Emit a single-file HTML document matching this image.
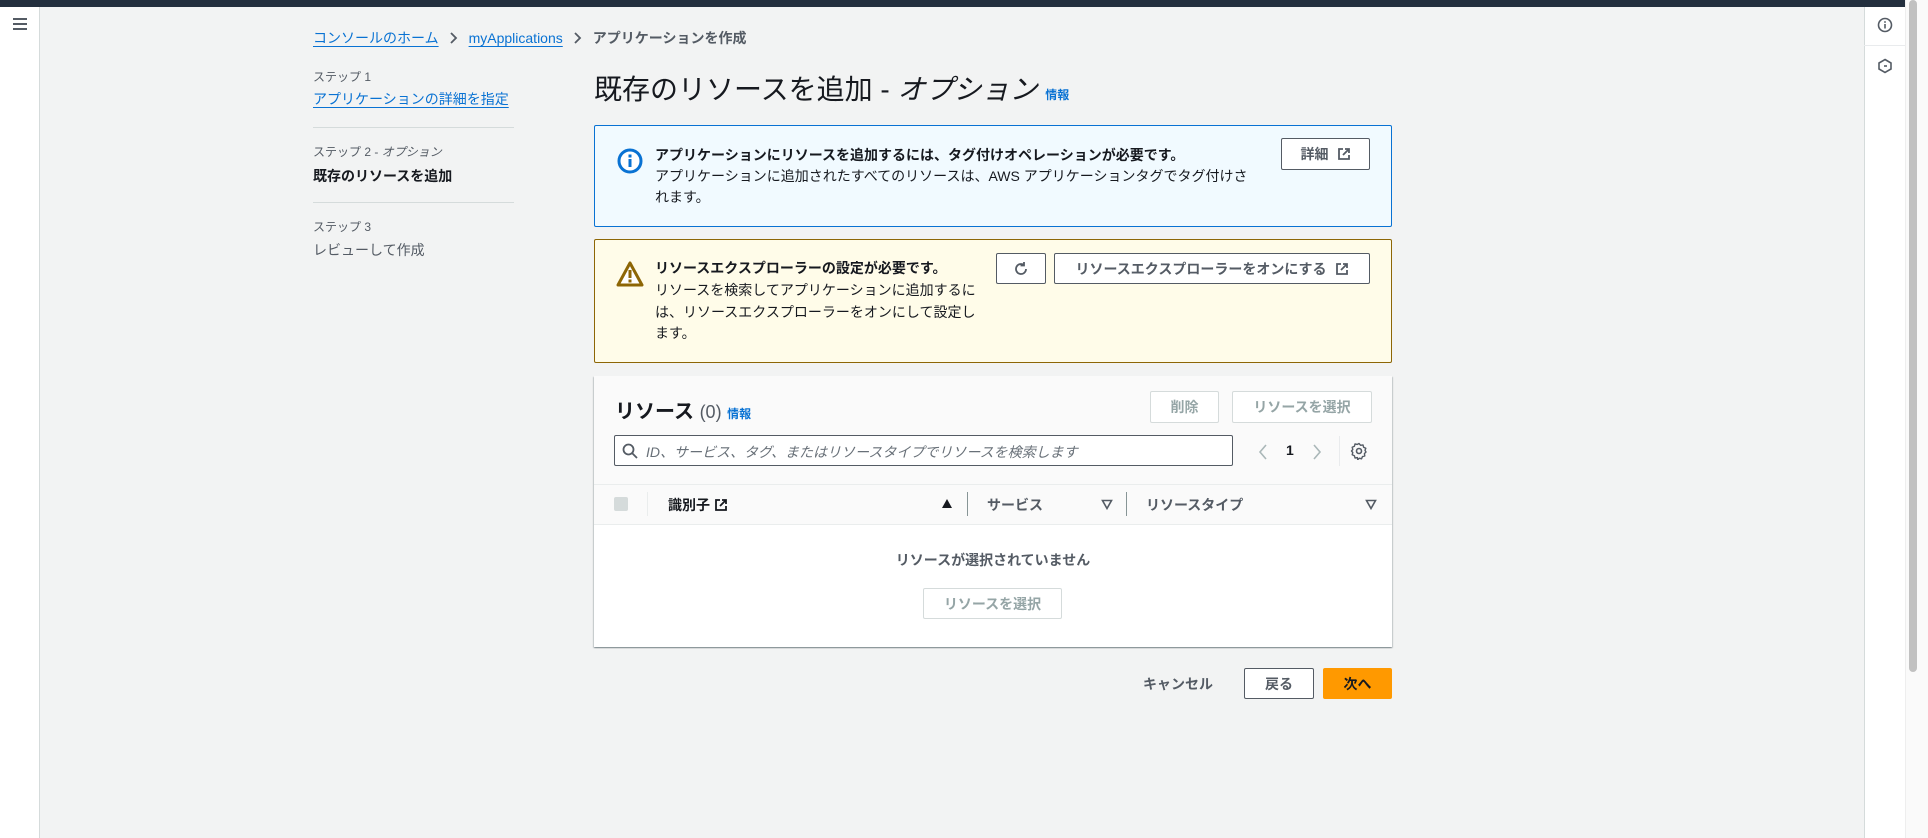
<!DOCTYPE html>
<html><head><meta charset="utf-8"><style>
*{box-sizing:border-box;margin:0;padding:0}
body{width:1928px;height:838px;background:#f2f3f3;font-family:"Liberation Sans","Noto Sans CJK JP",sans-serif;color:#16191f;font-size:14px;position:relative;overflow:hidden}
.a{position:absolute;white-space:nowrap}
.lnk{color:#0972d3;text-decoration:underline;text-underline-offset:3px}
.btn{position:absolute;border:1px solid #545b64;border-radius:2px;background:#fff;font-weight:bold;color:#545b64;display:flex;align-items:center;justify-content:center;gap:8px;font-size:14px}
.dis{border-color:#d5dbdb;color:#95a5a6}
.ext{width:14px;height:14px}
</style></head><body>
<div class="a" style="left:0;top:0;width:1928px;height:7px;background:#232f3e"></div>
<div class="a" style="left:0;top:7px;width:40px;height:831px;background:#fff;border-right:1px solid #d5dbdb"></div>
<div class="a" style="left:13px;top:18px;width:14px;height:12px;border-top:2px solid #545b64;border-bottom:2px solid #545b64"><div style="margin-top:3px;height:2px;background:#545b64"></div></div>
<div class="a" style="left:1864px;top:7px;width:41px;height:831px;background:#fff;border-left:1px solid #d5dbdb"></div>
<div class="a" style="left:1864px;top:45px;width:41px;height:1px;background:#e9ebed"></div>
<svg class="a" style="left:1877px;top:17px" width="16" height="16" viewBox="0 0 16 16"><circle cx="8" cy="8" r="6.5" fill="none" stroke="#545b64" stroke-width="1.6"/><rect x="7.2" y="7" width="1.6" height="4.5" fill="#545b64"/><rect x="7.2" y="4.2" width="1.6" height="1.6" fill="#545b64"/></svg>
<svg class="a" style="left:1877px;top:58px" width="16" height="16" viewBox="0 0 16 16"><path d="M8 1.5 14 5v6l-6 3.5L2 11V5z" fill="none" stroke="#545b64" stroke-width="1.6"/><path d="M10 8H7" stroke="#545b64" stroke-width="1.6"/></svg>
<div class="a" style="left:1905px;top:0;width:23px;height:838px;background:#fafafa;border-left:1px solid #eee"></div>
<div class="a" style="left:1909px;top:0;width:8px;height:672px;background:#c1c1c1;border-radius:4px"></div>

<div class="a" style="left:313px;top:28px;font-size:14px"><span class="lnk">コンソールのホーム</span><svg width="30" height="14" viewBox="0 0 30 14" style="vertical-align:-2px"><path d="M12 2l5 5-5 5" fill="none" stroke="#545b64" stroke-width="1.8"/></svg><span class="lnk">myApplications</span><svg width="30" height="14" viewBox="0 0 30 14" style="vertical-align:-2px"><path d="M12 2l5 5-5 5" fill="none" stroke="#545b64" stroke-width="1.8"/></svg><span style="color:#545b64;font-weight:bold">アプリケーションを作成</span></div>

<div class="a" style="left:313px;top:68px;font-size:12px;color:#545b64">ステップ 1</div>
<div class="a lnk" style="left:313px;top:89px">アプリケーションの詳細を指定</div>
<div class="a" style="left:313px;top:127px;width:201px;height:1px;background:#d5dbdb"></div>
<div class="a" style="left:313px;top:143px;font-size:12px;color:#545b64">ステップ 2 - <i>オプション</i></div>
<div class="a" style="left:313px;top:166px;font-weight:bold">既存のリソースを追加</div>
<div class="a" style="left:313px;top:202px;width:201px;height:1px;background:#d5dbdb"></div>
<div class="a" style="left:313px;top:218px;font-size:12px;color:#545b64">ステップ 3</div>
<div class="a" style="left:313px;top:240px;color:#545b64">レビューして作成</div>

<div class="a" style="left:594px;top:68px;font-size:28px">既存のリソースを追加 - <i>オプション</i> <span style="font-size:12px;font-weight:bold;color:#0972d3">情報</span></div>

<div class="a" style="left:594px;top:125px;width:798px;height:102px;background:#f1faff;border:1px solid #0972d3;border-radius:2px"></div>
<svg class="a" style="left:617px;top:148px" width="26" height="26" viewBox="0 0 26 26"><circle cx="13" cy="13" r="11" fill="#fff" stroke="#0972d3" stroke-width="3"/><rect x="11.5" y="11" width="3" height="8" fill="#0972d3"/><rect x="11.5" y="6.5" width="3" height="3" fill="#0972d3"/></svg>
<div class="a" style="left:655px;top:145px;font-weight:bold">アプリケーションにリソースを追加するには、タグ付けオペレーションが必要です。</div>
<div class="a" style="left:655px;top:166px">アプリケーションに追加されたすべてのリソースは、AWS アプリケーションタグでタグ付けさ</div>
<div class="a" style="left:655px;top:187px">れます。</div>
<div class="btn" style="left:1281px;top:138px;width:89px;height:32px">詳細 <svg class="ext" viewBox="0 0 14 14"><path d="M6 2H2v10h10V8M8 2h4v4M12 2 6 8" fill="none" stroke="#545b64" stroke-width="1.8"/></svg></div>

<div class="a" style="left:594px;top:239px;width:798px;height:124px;background:#fffce9;border:1px solid #8d6605;border-radius:2px"></div>
<svg class="a" style="left:615px;top:260px" width="30" height="28" viewBox="0 0 30 28"><path d="M15 3 27 25H3z" fill="#fff" stroke="#8d6605" stroke-width="3" stroke-linejoin="round"/><rect x="13.5" y="10" width="3" height="8" fill="#8d6605"/><rect x="13.5" y="19.5" width="3" height="3" fill="#8d6605"/></svg>
<div class="a" style="left:655px;top:258px;font-weight:bold">リソースエクスプローラーの設定が必要です。</div>
<div class="a" style="left:655px;top:280px">リソースを検索してアプリケーションに追加するに</div>
<div class="a" style="left:655px;top:302px">は、リソースエクスプローラーをオンにして設定し</div>
<div class="a" style="left:655px;top:323px">ます。</div>
<div class="btn" style="left:996px;top:253px;width:50px;height:31px"><svg width="16" height="16" viewBox="0 0 16 16"><path d="M13 8a5 5 0 1 1-2-4M11 1v3.5h-3.5" fill="none" stroke="#545b64" stroke-width="1.8"/></svg></div>
<div class="btn" style="left:1054px;top:253px;width:316px;height:31px">リソースエクスプローラーをオンにする <svg class="ext" viewBox="0 0 14 14"><path d="M6 2H2v10h10V8M8 2h4v4M12 2 6 8" fill="none" stroke="#545b64" stroke-width="1.8"/></svg></div>

<div class="a" style="left:594px;top:376px;width:798px;height:271px;background:#fff;box-shadow:0 1px 1px rgba(0,28,36,.3),1px 1px 1px rgba(0,28,36,.15),-1px 1px 1px rgba(0,28,36,.15)"></div>
<div class="a" style="left:594px;top:376px;width:798px;height:108px;background:#fafafa"></div>
<div class="a" style="left:615px;top:395px;font-size:20px;font-weight:bold">リソース <span style="font-weight:normal;color:#545b64;font-size:18px">(0)</span> <span style="font-size:12px;color:#0972d3">情報</span></div>
<div class="btn dis" style="left:1150px;top:391px;width:69px;height:32px">削除</div>
<div class="btn dis" style="left:1232px;top:391px;width:140px;height:32px">リソースを選択</div>
<div class="a" style="left:614px;top:435px;width:619px;height:31px;border:1px solid #545b64;border-radius:2px;background:#fff"></div>
<svg class="a" style="left:622px;top:443px" width="16" height="16" viewBox="0 0 16 16"><circle cx="6.5" cy="6.5" r="5" fill="none" stroke="#545b64" stroke-width="1.8"/><path d="M10 10l5 5" stroke="#545b64" stroke-width="1.8"/></svg>
<div class="a" style="left:646px;top:442px;font-style:italic;color:#687078">ID、サービス、タグ、またはリソースタイプでリソースを検索します</div>
<svg class="a" style="left:1257px;top:443px" width="12" height="18" viewBox="0 0 12 18"><path d="M9 2 3 9l6 7" fill="none" stroke="#aab7b8" stroke-width="1.6"/></svg>
<div class="a" style="left:1286px;top:442px;font-weight:bold;color:#16191f">1</div>
<svg class="a" style="left:1311px;top:443px" width="12" height="18" viewBox="0 0 12 18"><path d="M3 2l6 7-6 7" fill="none" stroke="#aab7b8" stroke-width="1.6"/></svg>
<div class="a" style="left:1339px;top:436px;width:1px;height:30px;background:#e9ebed"></div>
<svg class="a" style="left:1350px;top:442px" width="18" height="18" viewBox="0 0 18 18"><circle cx="9" cy="9" r="2.5" fill="none" stroke="#545b64" stroke-width="1.6"/><path d="M9 1.5l1.6 1.8 2.4-.4.6 2.3 2.2 1L15 8.4l1 1.6-1.6 1.6.4 2.4-2.3.6-1 2.2-2.2-.6-1.6 1.6L7.4 15.6 5 16 4.4 13.7 2.2 12.7 2.8 10.5 1.5 9l1.3-1.5-.6-2.2 2.2-1 .6-2.3 2.4.4z" fill="none" stroke="#545b64" stroke-width="1.4" stroke-linejoin="round"/></svg>
<div class="a" style="left:594px;top:484px;width:798px;height:41px;background:#fafafa;border-top:1px solid #eaeded;border-bottom:1px solid #eaeded"></div>
<div class="a" style="left:614px;top:497px;width:14px;height:14px;background:#d5dbdb;border-radius:2px"></div>
<div class="a" style="left:647px;top:492px;width:1px;height:24px;background:#eaeded"></div>
<div class="a" style="left:668px;top:495px;font-weight:bold;color:#16191f">識別子 <svg class="ext" viewBox="0 0 14 14" style="vertical-align:-2px"><path d="M6 2H2v10h10V8M8 2h4v4M12 2 6 8" fill="none" stroke="#16191f" stroke-width="1.8"/></svg></div>
<svg class="a" style="left:941px;top:498px" width="12" height="11" viewBox="0 0 12 11"><path d="M6 1l5 9H1z" fill="#16191f"/></svg>
<div class="a" style="left:967px;top:492px;width:1px;height:24px;background:#879596"></div>
<div class="a" style="left:987px;top:495px;font-weight:bold;color:#545b64">サービス</div>
<svg class="a" style="left:1101px;top:499px" width="12" height="11" viewBox="0 0 12 11"><path d="M1.5 1.5h9L6 9.5z" fill="none" stroke="#545b64" stroke-width="1.6"/></svg>
<div class="a" style="left:1126px;top:492px;width:1px;height:24px;background:#879596"></div>
<div class="a" style="left:1146px;top:495px;font-weight:bold;color:#545b64">リソースタイプ</div>
<svg class="a" style="left:1365px;top:499px" width="12" height="11" viewBox="0 0 12 11"><path d="M1.5 1.5h9L6 9.5z" fill="none" stroke="#545b64" stroke-width="1.6"/></svg>
<div class="a" style="left:594px;top:550px;width:798px;text-align:center;font-weight:bold;color:#545b64">リソースが選択されていません</div>
<div class="btn dis" style="left:923px;top:588px;width:139px;height:31px">リソースを選択</div>

<div class="a" style="left:1143px;top:674px;font-weight:bold;color:#545b64">キャンセル</div>
<div class="btn" style="left:1244px;top:668px;width:70px;height:31px;color:#545b64">戻る</div>
<div class="btn" style="left:1323px;top:668px;width:69px;height:31px;background:#ff9900;border-color:#ff9900;color:#16191f">次へ</div>
</body></html>
